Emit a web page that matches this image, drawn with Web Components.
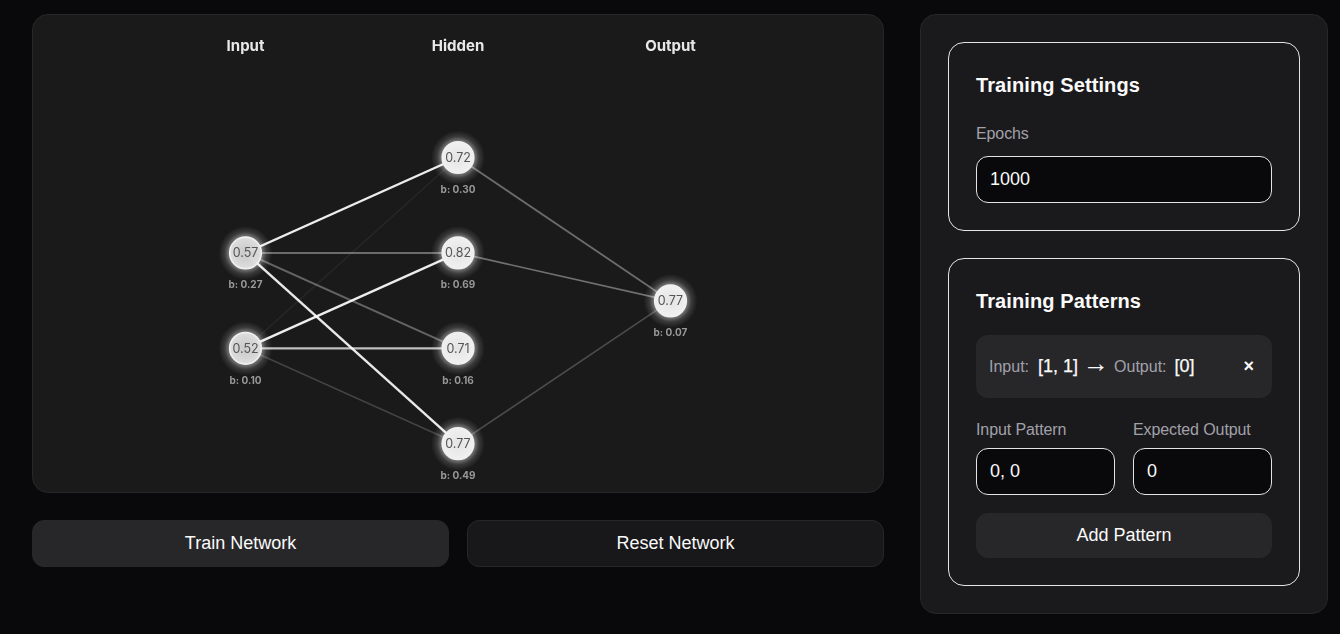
<!DOCTYPE html>
<html lang="en">
<head>
<meta charset="utf-8">
<title>Neural Network</title>
<style>
  html, body { margin: 0; height: 100%; background: #09090b; color: #fff; font-family: "Liberation Sans", Arial, sans-serif; overflow: hidden; }
</style>
</head>
<body>
<nn-app>
  <nn-canvas slot="main"></nn-canvas>
  <nn-actions slot="main">
    <nn-button variant="primary">Train Network</nn-button>
    <nn-button>Reset Network</nn-button>
  </nn-actions>
  <nn-panel slot="side">
    <nn-card heading="Training Settings" gap="22">
      <nn-field label="Epochs" gap="10">1000</nn-field>
    </nn-card>
    <nn-card heading="Training Patterns" gap="19">
      <nn-pattern input="[1, 1]" output="[0]"></nn-pattern>
      <nn-row>
        <nn-field label="Input Pattern" gap="6">0, 0</nn-field>
        <nn-field label="Expected Output" gap="6">0</nn-field>
      </nn-row>
      <nn-button variant="primary" short>Add Pattern</nn-button>
    </nn-card>
  </nn-panel>
</nn-app>

<script>
class NnApp extends HTMLElement {
  connectedCallback() {
    this.attachShadow({ mode: 'open' });
    this.shadowRoot.innerHTML = `
      <style>
        :host { display: flex; gap: 36px; padding: 14px 12px 20px 32px; align-items: flex-start; }
        .main { width: 852px; flex: none; display: flex; flex-direction: column; gap: 27px; }
        .side { width: 408px; flex: none; }
      </style>
      <div class="main"><slot name="main"></slot></div>
      <div class="side"><slot name="side"></slot></div>
    `;
  }
}
customElements.define('nn-app', NnApp);

const NODES = [
  { id: 'i0', x: 245.5, y: 252.9, v: '0.57', b: '0.27', fill: 'url(#fillDim)' },
  { id: 'i1', x: 245.5, y: 348.3, v: '0.52', b: '0.10', fill: 'url(#fillDim)' },
  { id: 'h0', x: 458, y: 157.5, v: '0.72', b: '0.30', fill: 'url(#fillLight)' },
  { id: 'h1', x: 458, y: 252.9, v: '0.82', b: '0.69', fill: 'url(#fillLight)' },
  { id: 'h2', x: 458, y: 348.3, v: '0.71', b: '0.16', fill: 'url(#fillLight)' },
  { id: 'h3', x: 458, y: 443.7, v: '0.77', b: '0.49', fill: 'url(#fillLight)' },
  { id: 'o0', x: 670.5, y: 300.9, v: '0.77', b: '0.07', fill: 'url(#fillLight)' }
];
// from, to, opacity, width
const LINKS = [
  ['i0', 'h0', 0.92, 2.4], ['i0', 'h1', 0.36, 2], ['i0', 'h2', 0.32, 2], ['i0', 'h3', 0.9, 2.4],
  ['i1', 'h0', 0.06, 1.4], ['i1', 'h1', 0.92, 2.4], ['i1', 'h2', 0.72, 2.2], ['i1', 'h3', 0.18, 1.6],
  ['h0', 'o0', 0.36, 1.8], ['h1', 'o0', 0.38, 1.6], ['h2', 'o0', 0.015, 1], ['h3', 'o0', 0.22, 1.6]
];

class NnCanvas extends HTMLElement {
  connectedCallback() {
    const at = id => NODES.find(n => n.id === id);
    const links = LINKS.map(([a, b, o, w]) => {
      const p = at(a), q = at(b);
      return `<line x1="${p.x}" y1="${p.y}" x2="${q.x}" y2="${q.y}" stroke="#fff" stroke-opacity="${o}" stroke-width="${w}"/>`;
    }).join('');
    const nodes = NODES.map(n => `
      <circle cx="${n.x}" cy="${n.y}" r="27" fill="url(#glow)"/>
      <circle cx="${n.x}" cy="${n.y}" r="15.8" fill="${n.fill}" stroke="#f0f0f0" stroke-width="1.6"/>
      <text class="val" x="${n.x}" y="${n.y + 4.5}">${n.v}</text>
      <text class="bias" x="${n.x}" y="${n.y + 35.4}">b: ${n.b}</text>
    `).join('');
    this.attachShadow({ mode: 'open' });
    this.shadowRoot.innerHTML = `
      <style>
        :host { display: block; height: 479px; box-sizing: border-box; background: #1a1a1a; border: 1px solid #27272a; border-radius: 16px; overflow: hidden; }
        svg { display: block; width: 850px; height: 477px; filter: blur(0.45px); font-family: Inter, "Liberation Sans", sans-serif; }
        text { text-anchor: middle; }
        .head { font-size: 15px; font-weight: 700; fill: #e8e8e8; }
        .val { font-size: 12.5px; fill: #555; }
        .bias { font-size: 10px; font-weight: 700; fill: #999; }
      </style>
      <svg viewBox="33 15 850 477">
        <defs>
          <radialGradient id="glow">
            <stop offset="0.55" stop-color="#fff" stop-opacity="0.5"/>
            <stop offset="0.78" stop-color="#fff" stop-opacity="0.14"/>
            <stop offset="1" stop-color="#fff" stop-opacity="0"/>
          </radialGradient>
          <radialGradient id="fillLight">
            <stop offset="0" stop-color="#e4e4e4"/>
            <stop offset="1" stop-color="#f0f0f0"/>
          </radialGradient>
          <radialGradient id="fillDim">
            <stop offset="0" stop-color="#cdcdcd" stop-opacity="0.92"/>
            <stop offset="1" stop-color="#e2e2e2" stop-opacity="0.96"/>
          </radialGradient>
        </defs>
        <text class="head" x="245.5" y="51">Input</text>
        <text class="head" x="458" y="51">Hidden</text>
        <text class="head" x="670.5" y="51">Output</text>
        ${links}
        ${nodes}
      </svg>
    `;
  }
}
customElements.define('nn-canvas', NnCanvas);

class NnActions extends HTMLElement {
  connectedCallback() {
    this.attachShadow({ mode: 'open' });
    this.shadowRoot.innerHTML = `
      <style>
        :host { display: grid; grid-template-columns: 1fr 1fr; gap: 18px; }
      </style>
      <slot></slot>
    `;
  }
}
customElements.define('nn-actions', NnActions);

class NnButton extends HTMLElement {
  connectedCallback() {
    this.attachShadow({ mode: 'open' });
    this.shadowRoot.innerHTML = `
      <style>
        :host { display: flex; align-items: center; justify-content: center; height: 47px; box-sizing: border-box; background: #18181b; border: 1px solid #27272a; border-radius: 12px; color: #fafafa; font-size: 18px; cursor: pointer; }
        :host([variant="primary"]) { background: #27272a; }
        :host([short]) { height: 45px; }
      </style>
      <slot></slot>
    `;
  }
}
customElements.define('nn-button', NnButton);

class NnPanel extends HTMLElement {
  connectedCallback() {
    this.attachShadow({ mode: 'open' });
    this.shadowRoot.innerHTML = `
      <style>
        :host { display: flex; flex-direction: column; gap: 27px; box-sizing: border-box; padding: 27px; background: #1a1a1c; border: 1px solid #27272a; border-radius: 16px; }
      </style>
      <slot></slot>
    `;
  }
}
customElements.define('nn-panel', NnPanel);

class NnCard extends HTMLElement {
  connectedCallback() {
    this.attachShadow({ mode: 'open' });
    this.shadowRoot.innerHTML = `
      <style>
        :host { display: block; box-sizing: border-box; padding: 27px; border: 1px solid #e4e4e7; border-radius: 16px; }
        h2 { margin: 0 0 ${this.getAttribute('gap')}px; font-size: 20px; line-height: 30px; font-weight: 700; letter-spacing: 0.1px; color: #fafafa; }
        .body { display: flex; flex-direction: column; gap: 18px; }
        ::slotted(nn-row) { margin-top: 2px; }
      </style>
      <h2>${this.getAttribute('heading')}</h2>
      <div class="body"><slot></slot></div>
    `;
  }
}
customElements.define('nn-card', NnCard);

class NnField extends HTMLElement {
  connectedCallback() {
    this.attachShadow({ mode: 'open' });
    this.shadowRoot.innerHTML = `
      <style>
        :host { display: block; min-width: 0; }
        label { display: block; margin-bottom: ${this.getAttribute('gap')}px; font-size: 16px; line-height: 24px; letter-spacing: -0.1px; color: #a1a1aa; }
        .box { display: flex; align-items: center; height: 47px; box-sizing: border-box; padding: 0 13px; background: #09090b; border: 1px solid #e4e4e7; border-radius: 12px; color: #fafafa; font-size: 18px; }
      </style>
      <label>${this.getAttribute('label')}</label>
      <div class="box" role="textbox"><slot></slot></div>
    `;
  }
}
customElements.define('nn-field', NnField);

class NnRow extends HTMLElement {
  connectedCallback() {
    this.attachShadow({ mode: 'open' });
    this.shadowRoot.innerHTML = `
      <style>
        :host { display: grid; grid-template-columns: 1fr 1fr; gap: 18px; }
      </style>
      <slot></slot>
    `;
  }
}
customElements.define('nn-row', NnRow);

class NnPattern extends HTMLElement {
  connectedCallback() {
    this.attachShadow({ mode: 'open' });
    this.shadowRoot.innerHTML = `
      <style>
        :host { display: flex; align-items: center; height: 63px; box-sizing: border-box; padding: 0 18px 0 13px; background: #27272a; border-radius: 12px; font-size: 16px; color: #a1a1aa; }
        .val { color: #fafafa; font-size: 18px; margin-left: 9px; -webkit-text-stroke: 0.25px #fafafa; }
        .val.out { margin-left: 8px; }
        .arrow { flex: none; width: 19px; color: #fafafa; font-size: 26px; line-height: 0; white-space: nowrap; text-indent: -3px; margin: 0 9px 8px 8px; }
        .x { margin-left: auto; color: #fafafa; font-size: 18px; font-weight: 700; }
      </style>
      <span>Input:</span><span class="val">${this.getAttribute('input')}</span>
      <span class="arrow">→</span>
      <span>Output:</span><span class="val out">${this.getAttribute('output')}</span>
      <span class="x">×</span>
    `;
  }
}
customElements.define('nn-pattern', NnPattern);
</script>
</body>
</html>
